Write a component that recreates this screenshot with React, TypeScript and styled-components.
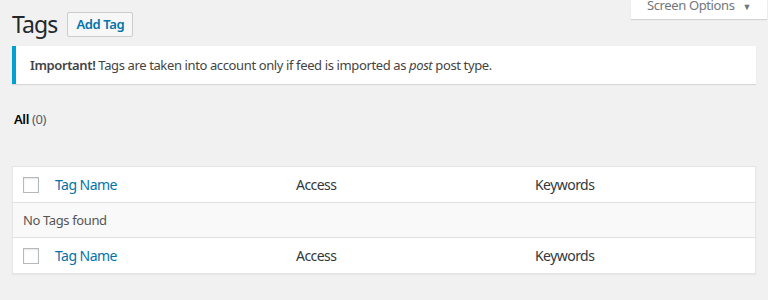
import React from 'react';
import styled, { createGlobalStyle } from 'styled-components';

const GlobalStyle = createGlobalStyle`
  html, body {
    margin: 0;
    padding: 0;
    background: #f1f1f1;
    color: #444;
    font-family: "Noto Sans", "Open Sans", Arial, sans-serif;
    font-size: 13px;
    letter-spacing: -0.38px;
  }
  * { box-sizing: border-box; }
`;

const Page = styled.div`
  position: relative;
  padding: 0 12px 20px 12px;
  min-height: 300px;
`;

const ScreenTab = styled.button`
  position: absolute;
  top: 0;
  right: 1px;
  width: 136px;
  height: 19px;
  padding: 0 0 0 16px;
  background: #fff;
  border: none;
  box-shadow: 0 1px 1px rgba(0, 0, 0, 0.12);
  color: #72777c;
  font-family: inherit;
  font-size: 13px;
  letter-spacing: -0.38px;
  line-height: 13px;
  display: flex;
  align-items: flex-start;
  gap: 8px;
  overflow: hidden;
`;

const TabLabel = styled.span`
  margin-top: -1px;
`;

const Caret = styled.span`
  margin-top: 0;
  font-size: 9px;
  line-height: 13px;
`;

const Header = styled.div`
  display: flex;
  align-items: center;
  gap: 10px;
  padding-top: 10px;
`;

const Title = styled.h1`
  margin: 0;
  font-size: 23px;
  font-weight: 400;
  line-height: 29px;
  letter-spacing: -0.9px;
  color: #23282d;
`;

const AddButton = styled.a`
  display: inline-block;
  border: 1px solid #ccc;
  border-radius: 2px;
  background: #f7f7f7;
  color: #0073aa;
  font-weight: 600;
  font-size: 13px;
  line-height: 23px;
  padding: 0 8px;
  text-decoration: none;
`;

const Notice = styled.div`
  margin-top: 7px;
  background: #fff;
  border-left: 4px solid #00a0d2;
  box-shadow: 0 1px 1px rgba(0, 0, 0, 0.1);
  padding: 10px 14px;
  line-height: 18px;
  color: #444;

  strong { font-weight: 600; }
  em { font-style: italic; }
`;

const Subsub = styled.div`
  margin-top: 26px;
  padding-left: 2px;
  line-height: 18px;
  color: #000;
  font-weight: 600;

  span { color: #555d66; font-weight: 400; }
`;

const Table = styled.div`
  margin-top: 38px;
  background: #fff;
  border: 1px solid #e5e5e5;
  box-shadow: 0 1px 1px rgba(0, 0, 0, 0.04);
`;

const Row = styled.div<{ $alt?: boolean; $line?: 'top' | 'bottom' }>`
  display: grid;
  grid-template-columns: 42px 241px 239px 1fr;
  align-items: center;
  height: ${(p) => (p.$alt ? '34px' : '36px')};
  background: ${(p) => (p.$alt ? '#f9f9f9' : '#fff')};
  ${(p) => (p.$line === 'bottom' ? 'border-bottom: 1px solid #e1e1e1;' : '')}
  ${(p) => (p.$line === 'top' ? 'border-top: 1px solid #e1e1e1;' : '')}
`;

const Empty = styled.div`
  grid-column: 1 / -1;
  padding-left: 10px;
  color: #555;
`;

const Check = styled.span`
  display: block;
  width: 16px;
  height: 16px;
  margin-left: 10px;
  border: 1px solid #b4b9be;
  background: #fff;
  box-shadow: inset 0 1px 2px rgba(0, 0, 0, 0.1);
`;

const SortLink = styled.a`
  color: #0073aa;
  font-size: 14px;
  letter-spacing: -0.55px;
  text-decoration: none;
`;

const Col = styled.span`
  color: #32373c;
  font-size: 14px;
  letter-spacing: -0.55px;
`;

const HeadRow = ({ line }: { line: 'top' | 'bottom' }) => (
  <Row $line={line}>
    <Check />
    <SortLink href="#">Tag Name</SortLink>
    <Col>Access</Col>
    <Col>Keywords</Col>
  </Row>
);

export default function App() {
  return (
    <>
      <GlobalStyle />
      <Page>
        <ScreenTab>
          <TabLabel>Screen Options</TabLabel>
          <Caret>▼</Caret>
        </ScreenTab>
        <Header>
          <Title>Tags</Title>
          <AddButton href="#">Add Tag</AddButton>
        </Header>
        <Notice>
          <strong>Important!</strong> Tags are taken into account only if feed is imported as <em>post</em> post type.
        </Notice>
        <Subsub>
          All <span>(0)</span>
        </Subsub>
        <Table>
          <HeadRow line="bottom" />
          <Row $alt>
            <Empty>No Tags found</Empty>
          </Row>
          <HeadRow line="top" />
        </Table>
      </Page>
    </>
  );
}
